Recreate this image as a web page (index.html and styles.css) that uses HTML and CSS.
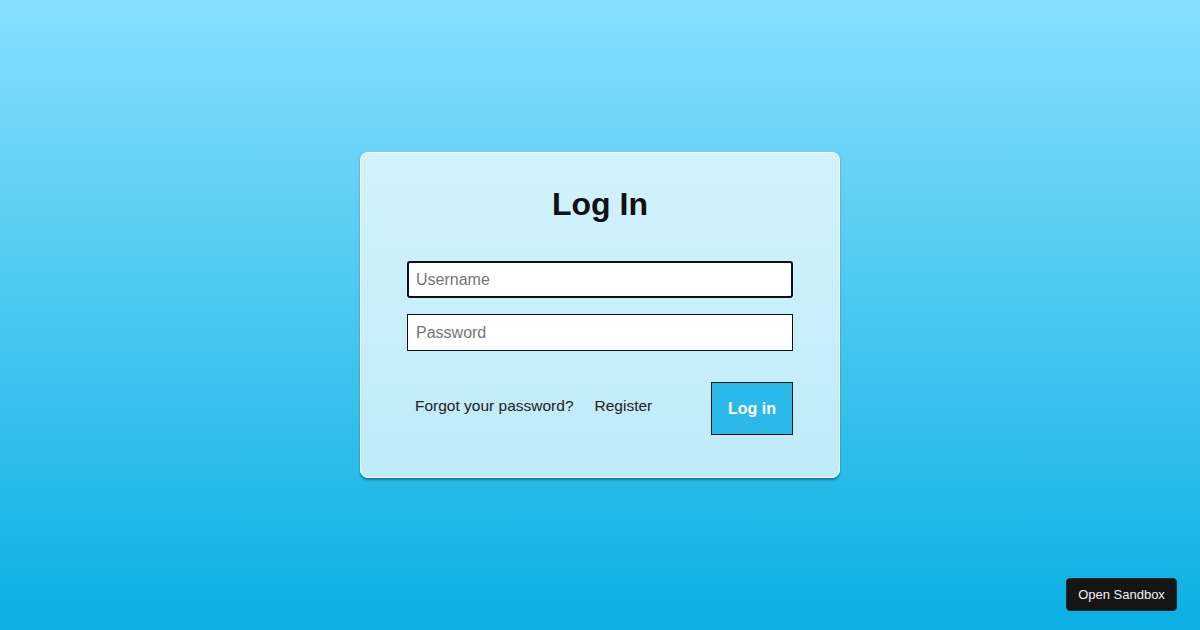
FILE: index.html
```html
<!DOCTYPE html>
<html lang="en">
<head>
    <meta charset="UTF-8">
    <meta name="viewport" content="width=device-width, initial-scale=1.0">
    <title>Log In</title>
    <link rel="stylesheet" href="styles.css">
</head>
<body>
    <form class="login-card">
        <h1>Log In</h1>
        <input type="text" class="field field-active" placeholder="Username">
        <input type="password" class="field" placeholder="Password">
        <div class="login-actions">
            <div class="login-links">
                <a href="#">Forgot your password?</a>
                <a href="#">Register</a>
            </div>
            <button type="button" class="login-btn">Log in</button>
        </div>
    </form>

    <a href="#" class="sandbox-btn">Open Sandbox</a>
</body>
</html>
```

FILE: styles.css
```css
/* General styling */
body {
    font-family: "Liberation Sans", Arial, sans-serif;
    margin: 0;
    height: 100vh;
    display: flex;
    justify-content: center;
    align-items: center;
    background: linear-gradient(to bottom, #87dffd, #0aafe3);
}

/* Login card */
.login-card {
    width: 480px;
    box-sizing: border-box;
    padding: 33px 46px 42px;
    background-color: rgba(255, 255, 255, 0.7);
    border: 1px solid #fff;
    border-radius: 8px;
    box-shadow: 0 2px 2px rgba(0, 40, 70, 0.45);
    display: flex;
    flex-direction: column;
}

.login-card h1 {
    margin: 0 0 38px;
    font-size: 32px;
    line-height: 37px;
    text-align: center;
    color: #111;
}

.field {
    height: 37px;
    box-sizing: border-box;
    padding: 0 8px;
    border: 1px solid #111;
    background: #fff;
    font-family: inherit;
    font-size: 16px;
    color: #222;
    margin-bottom: 16px;
}

.field:last-of-type {
    margin-bottom: 0;
}

.field::placeholder {
    color: #757575;
}

.field-active {
    border: 2px solid #111;
    border-radius: 3px;
    padding-left: 7px;
}

/* Links and submit */
.login-actions {
    margin-top: 31px;
    display: flex;
    justify-content: space-between;
    align-items: center;
}

.login-links {
    display: flex;
    gap: 21px;
    padding-left: 8px;
    margin-top: -6px;
}

.login-links a {
    color: #222;
    text-decoration: none;
    font-size: 15.5px;
}

.login-btn {
    width: 82px;
    height: 53px;
    background-color: #2cb9ea;
    border: 1px solid #111;
    color: #fff;
    font-family: inherit;
    font-size: 16px;
    font-weight: bold;
    cursor: pointer;
}

/* Sandbox button */
.sandbox-btn {
    position: fixed;
    right: 23px;
    bottom: 19px;
    width: 111px;
    height: 33px;
    box-sizing: border-box;
    display: flex;
    align-items: center;
    justify-content: center;
    background-color: #151515;
    border: 1px solid #2a2a2a;
    border-radius: 4px;
    color: #f2f2f2;
    font-size: 13px;
    text-decoration: none;
}
```
